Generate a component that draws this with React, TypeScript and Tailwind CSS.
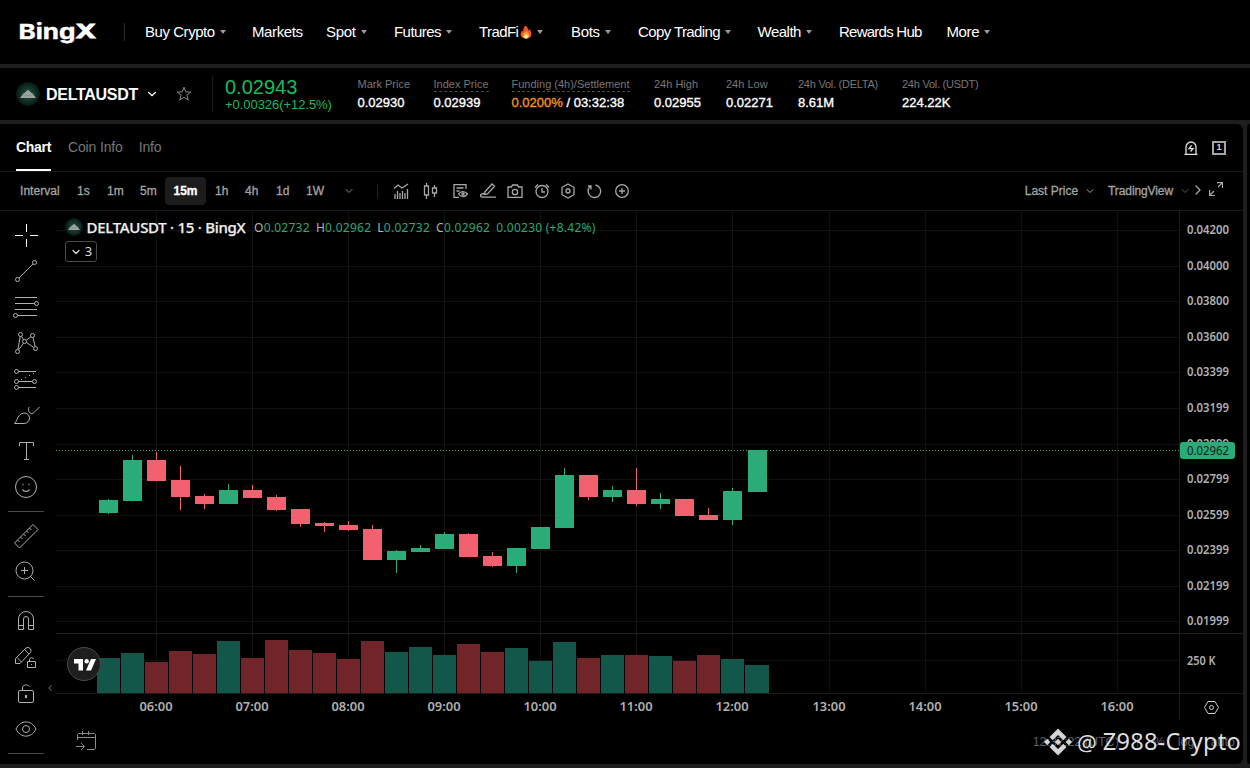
import type { ReactNode } from 'react'
import { ChevronDown, ChevronLeft, ChevronRight } from 'lucide-react'

const NAV = [
  { label: 'Buy Crypto', menu: true,  cls: 'w-[107px] tracking-[-0.45px]' },
  { label: 'Markets',    menu: false, cls: 'w-[74px] tracking-[-0.4px]' },
  { label: 'Spot',       menu: true,  cls: 'w-[68px] tracking-[-0.3px]' },
  { label: 'Futures',    menu: true,  cls: 'w-[85px] tracking-[-0.55px]' },
  { label: 'TradFi',     menu: true,  cls: 'w-[92px] tracking-[-0.6px]', hot: true },
  { label: 'Bots',       menu: true,  cls: 'w-[67px] tracking-[-0.3px]' },
  { label: 'Copy Trading', menu: true, cls: 'w-[119.5px] tracking-[-0.6px]' },
  { label: 'Wealth',     menu: true,  cls: 'w-[81.5px] tracking-[-0.5px]' },
  { label: 'Rewards Hub', menu: false, cls: 'w-[107.5px] tracking-[-0.75px]' },
  { label: 'More',       menu: true,  cls: 'w-[60px] tracking-[-0.4px]' },
]

const STATS = [
  { label: 'Mark Price',       value: '0.02930', cls: 'w-[76px]' },
  { label: 'Index Price',      value: '0.02939', cls: 'w-[78px]', dashed: true },
  { label: '24h High',         value: '0.02955', cls: 'w-[72px]' },
  { label: '24h Low',          value: '0.02271', cls: 'w-[72px]' },
  { label: '24h Vol. (DELTA)', value: '8.61M',   cls: 'w-[104px] tracking-[-0.25px]' },
  { label: '24h Vol. (USDT)',  value: '224.22K', cls: 'w-[90px] tracking-[-0.25px]' },
]

const INTERVALS = [
  { label: '1s',  cls: 'w-[30px]' },
  { label: '1m',  cls: 'w-[33px]' },
  { label: '5m',  cls: 'w-[25px]' },
  { label: '15m', cls: 'w-[41px] mr-[9px]', active: true },
  { label: '1h',  cls: 'w-[30px]' },
  { label: '4h',  cls: 'w-[31px]' },
  { label: '1d',  cls: 'w-[30px]' },
  { label: '1W',  cls: 'w-[37px]' },
]

// [up, bodyTop, bodyBottom, wickTop, wickBottom, volumeTop]
const CANDLES: [number, number, number, number, number, number][] = [
  [1, 500, 513, 499, 514, 658],
  [1, 460, 501, 455, 501, 653],
  [0, 460, 481, 452, 481, 662],
  [0, 480, 497, 466, 510, 651],
  [0, 496, 504, 494, 509, 654],
  [1, 490, 504, 484, 504, 641],
  [0, 490, 498, 485, 498, 658],
  [0, 497, 510, 495, 511, 640],
  [0, 509, 524, 509, 527, 650],
  [0, 523, 526, 522, 532, 653],
  [0, 525, 530, 521, 531, 659],
  [0, 529, 560, 525, 560, 641],
  [1, 551, 560, 550, 573, 652],
  [1, 548, 552, 545, 552, 647],
  [1, 534, 549, 532, 549, 655],
  [0, 534, 557, 533, 557, 644],
  [0, 556, 566, 552, 567, 652],
  [1, 548, 566, 548, 573, 648],
  [1, 527, 549, 527, 549, 661],
  [1, 475, 528, 468, 528, 642],
  [0, 475, 497, 475, 500, 658],
  [1, 490, 497, 486, 502, 655],
  [0, 490, 504, 468, 506, 655],
  [1, 499, 504, 493, 509, 656],
  [0, 499, 516, 499, 516, 661],
  [0, 515, 520, 508, 520, 655],
  [1, 491, 520, 488, 525, 659],
  [1, 450, 492, 450, 492, 665],
]

const PRICES: [string, number][] = [
  ['0.04200', 230], ['0.04000', 266], ['0.03800', 301], ['0.03600', 337],
  ['0.03399', 372], ['0.03199', 408], ['0.02999', 444], ['0.02799', 479],
  ['0.02599', 515], ['0.02399', 550], ['0.02199', 586], ['0.01999', 621],
]

const TIMES: [string, number][] = [
  ['06:00', 156], ['07:00', 252], ['08:00', 348], ['09:00', 444], ['10:00', 540], ['11:00', 636],
  ['12:00', 732], ['13:00', 829], ['14:00', 925], ['15:00', 1021], ['16:00', 1117],
]

const UP = '#2aab78'
const DOWN = '#f2616d'

function Tool({ children }: { children: ReactNode }) {
  return (
    <button className="flex h-9 w-[52px] shrink-0 items-center justify-center">
      <svg width="28" height="28" viewBox="0 0 28 28" fill="none" stroke="#b0b0b0" strokeWidth="1">
        {children}
      </svg>
    </button>
  )
}

function SmallTool({ children, cls = 'w-[27px]' }: { children: ReactNode; cls?: string }) {
  return (
    <button className={`flex shrink-0 items-center justify-center ${cls}`}>
      <svg width="18" height="18" viewBox="0 0 18 18" fill="none" stroke="#a8a8a8" strokeWidth="1.3">
        {children}
      </svg>
    </button>
  )
}

function Divider({ cls }: { cls: string }) {
  return <div className={`ml-2 h-px w-9 shrink-0 bg-[#4a4a4a] ${cls}`} />
}

function Stat({ label, value, cls, dashed }: { label: string; value: ReactNode; cls: string; dashed?: boolean }) {
  return (
    <div className={`flex shrink-0 flex-col items-start ${cls}`}>
      <div className={`h-[15px] text-[11px] leading-[14px] text-[#777] ${dashed ? 'border-b border-dashed border-[#4a4a4a]' : ''}`}>{label}</div>
      <div className="mt-0.5 text-[13px] leading-[18px] tracking-normal [-webkit-text-stroke:0.35px]">{value}</div>
    </div>
  )
}

function Coin({ size }: { size: number }) {
  return (
    <svg width={size} height={size} viewBox="0 0 24 24" className="shrink-0">
      <defs>
        <radialGradient id="coin">
          <stop offset="0.2" stopColor="#17503c" />
          <stop offset="1" stopColor="#0a1613" />
        </radialGradient>
      </defs>
      <circle cx="12" cy="12" r="12" fill="url(#coin)" />
      <path d="M12 7.8 15.5 11h.8l3.700 5H4l3.700-5h.8Z" fill="#9da3a1" />
      <path d="M6 13.2h12" stroke="#7d8583" strokeWidth="0.6" />
    </svg>
  )
}

function Flame() {
  return (
    <svg width="12" height="14" viewBox="0 0 12 14" className="ml-0.5">
      <path d="M5.4.6C7.8 2 8.3 4 8.2 5.6 8.9 5.3 9 4.4 9 3.8c2 2 2.6 4 2.4 5.8C11.1 12 9.2 13.6 6 13.6S.8 12 .6 9.6C.5 7.6 1.5 6.4 2.2 5.2c.2.8.5 1.3 1 1.5C3 4.5 4 2.2 5.4.6Z" fill="#f0532d" />
      <path d="M6 5.8c1.6 1.2 3.4 2.6 3.4 4.6 0 2-1.5 3.200-3.400 3.200S2.600 12.400 2.600 10.600C2.600 9 4 8.600 4.200 7.400 5 7.800 5.900 7 6 5.800Z" fill="#fb9f2f" />
      <path d="M6.2 9c1 .9 1.6 1.6 1.6 2.6s-.8 1.900-1.800 1.900-1.900-.7-1.900-1.700C4.100 10.700 5.700 10.300 6.200 9Z" fill="#fff0a8" />
    </svg>
  )
}

function Chart() {
  return (
    <svg width="1187" height="509" viewBox="56 211 1187 509" shapeRendering="crispEdges" className="block shrink-0">
      {/* Grid */}
      {TIMES.map(([t, x]) => <rect key={t} x={x} y="211" width="1" height="482" fill="#111" />)}
      {PRICES.map(([p, y]) => <rect key={p} x="56" y={y} width="1123" height="1" fill="#111" />)}
      <rect x="56" y="660" width="1123" height="1" fill="#111" />
      <rect x="56" y="633" width="1187" height="1" fill="#212121" />
      <rect x="56" y="693" width="1187" height="1" fill="#1a1a1a" />
      <rect x="1179" y="211" width="1" height="509" fill="#1c1c1c" />

      {/* Volume */}
      {CANDLES.map((c, i) => (
        <rect
          key={i}
          x={97 + i * 24}
          y={c[5]}
          width={i === CANDLES.length - 1 ? 24 : 23}
          height={693 - c[5]}
          fill={c[0] ? '#145d50' : '#7b282c'}
          fillOpacity="0.93"
        />
      ))}

      {/* Price */}
      <line x1="56" x2="1179" y1="450.5" y2="450.5" stroke={UP} strokeDasharray="1 2" />
      {CANDLES.map((c, i) => {
        const x = 99 + i * 24 + (i > 26 ? 1 : 0)
        return (
          <g key={i} fill={c[0] ? UP : DOWN}>
            <rect x={x + 9} y={c[3]} width="1" height={c[4] - c[3]} />
            <rect x={x} y={c[1]} width="19" height={c[2] - c[1]} />
          </g>
        )
      })}

      {/* Axes */}
      <g fill="#b0b0b0" fontFamily='"Noto Sans", sans-serif' fontSize="12" fontWeight="600">
        {PRICES.map(([p, y]) => <text key={p} x="1187" y={y + 4} textLength="42" lengthAdjust="spacingAndGlyphs">{p}</text>)}
        <text x="1187" y="665" textLength="28.5" lengthAdjust="spacingAndGlyphs">250 K</text>
        {TIMES.map(([t, x]) => <text key={t} x={x - 16.5} y="711" textLength="33" lengthAdjust="spacingAndGlyphs">{t}</text>)}
      </g>
      <rect x="1180" y="442" width="55" height="17" rx="3" fill={UP} shapeRendering="auto" />
      <text x="1187" y="455" textLength="42" lengthAdjust="spacingAndGlyphs" fill="#0b1f17" fontFamily='"Noto Sans", sans-serif' fontSize="12">0.02962</text>
      <g fill="none" stroke="#cfcfcf" shapeRendering="auto">
        <path d="M1208 701.5h7l3.500 6-3.500 6h-7l-3.500-6Z" />
        <circle cx="1211.5" cy="707.5" r="2" />
      </g>
    </svg>
  )
}

function Ohlc({ k, v }: { k: string; v: string }) {
  return <span className="text-[#2aa876]"><span className="text-[#b4b4b4]">{k}</span>{v}</span>
}

export default function App() {
  return (
    <div className="flex h-[768px] w-[1250px] flex-col gap-1 overflow-hidden bg-[#1e1e1e] font-['Liberation_Sans',Arial,sans-serif] text-white">

      {/* ── Site header ── */}
      <header className="flex h-16 shrink-0 items-center bg-black">
        <svg width="80" height="28" viewBox="0 0 80 28" className="ml-[18px]">
          <g fill="#fff" stroke="#fff" strokeWidth="0.4" fontFamily='"Inter", sans-serif' fontWeight="700">
            <text x="0.5" y="20.8" fontSize="20.5" textLength="57" lengthAdjust="spacingAndGlyphs">Bing</text>
            <text x="57.5" y="20.3" fontSize="18.5" strokeWidth="0.9" textLength="20.5" lengthAdjust="spacingAndGlyphs">X</text>
          </g>
        </svg>
        <div className="ml-[26px] mr-5 h-[18px] w-px bg-[#2b2b2b]" />
        <nav className="flex text-[15px]">
          {NAV.map(({ label, menu, cls, hot }) => (
            <a key={label} className={`flex shrink-0 items-center whitespace-nowrap ${cls}`}>
              {label}
              {hot && <Flame />}
              {menu && <span className="ml-[5px] h-0 w-0 border-x-[3.5px] border-t-4 border-x-transparent border-t-[#9a9a9a]" />}
            </a>
          ))}
        </nav>
      </header>

      {/* ── Ticker ── */}
      <section className="flex h-[52px] shrink-0 items-center bg-black">
        <div className="flex w-[212px] items-center pl-4">
          <Coin size={24} />
          <span className="ml-1.5 pt-px text-base font-bold tracking-[-0.28px]">DELTAUSDT</span>
          <ChevronDown size={14} strokeWidth={2} className="ml-[7px]" />
          <svg width="16" height="16" viewBox="0 0 16 16" fill="none" stroke="#8d8d8d" className="ml-[17px]">
            <path d="m8 1.200 1.800 4.600 5 .3-3.900 3.100L12.200 14 8 11.300 3.800 14l1.300-4.800L1.200 6.100l5-.3Z" />
          </svg>
        </div>
        <div className="h-9 w-px bg-[#1c1c1c]" />
        <div className="w-[132px] pl-3 text-[#1bb95c]">
          <div className="text-[20px] leading-[22px]">0.02943</div>
          <div className="text-[13px] leading-[14px] tracking-[-0.05px]">+0.00326(+12.5%)</div>
        </div>
        <div className="flex whitespace-nowrap pl-[12.5px]">
          {STATS.slice(0, 2).map(s => <Stat key={s.label} {...s} />)}
          <Stat
            label="Funding (4h)/Settlement"
            dashed
            cls="w-[142.5px]"
            value={<><span className="text-[#f7931a]">0.0200%</span> / 03:32:38</>}
          />
          {STATS.slice(2).map(s => <Stat key={s.label} {...s} />)}
        </div>
      </section>

      <div className="flex h-[640px] shrink-0 gap-1">
        <main className="flex w-[1243px] flex-col overflow-hidden rounded-r-md bg-black">

          {/* Tabs */}
          <div className="flex h-12 shrink-0 items-stretch border-b border-[#181818] pl-4 text-sm">
            <span className="w-[35px] border-b-2 border-white pt-[13px] font-bold tracking-[-0.3px]">Chart</span>
            <span className="ml-[17px] pt-[13px] tracking-[-0.15px] text-[#777]">Coin Info</span>
            <span className="ml-4 pt-[13px] tracking-[-0.15px] text-[#777]">Info</span>
            <div className="ml-auto flex items-center gap-3.5 pr-[17px]">
              <svg width="14" height="14" viewBox="0 0 14 14" fill="none" stroke="#e0e0e0" strokeWidth="1.3">
                <path d="M.5 13.300h13M2 13V6a5 5 0 0 1 10 0v7M7.700 4.300 5 7.700h4L6.600 10.500" />
              </svg>
              <span className="flex h-3.5 w-3.5 items-center justify-center border-2 border-[#a5a5a5] text-[9px] font-bold leading-none text-[#d0d0d0]">1</span>
            </div>
          </div>

          {/* Interval bar */}
          <div className="flex h-[39px] shrink-0 items-center border-b border-[#181818] pb-px text-xs text-[#a4a4a4] [-webkit-text-stroke:0.3px]">
            <span className="w-[69px] pl-5 tracking-[0.05px]">Interval</span>
            <div className="flex items-center pl-2">
              {INTERVALS.map(({ label, cls, active }) => (
                <span key={label} className={active ? `flex h-7 items-center justify-center rounded bg-[#1c1c1c] font-bold text-white ${cls}` : cls}>
                  {label}
                </span>
              ))}
            </div>
            <ChevronDown size={12} className="text-[#8a8a8a]" />
            <div className="ml-[22px] mr-2 h-3.5 w-px bg-[#262626]" />
            <SmallTool cls="w-[30px]">
              <path d="M2 6.500 6 3l4 3 6-4M3 17v-5M5.500 17V9M8 17v-6M10.500 17V9M13 17v-6M15.500 17V7" />
            </SmallTool>
            <SmallTool cls="w-[30px]">
              <path d="M4.500 1v3M4.500 13v4M2.500 4h4v9h-4ZM12.500 3v3M12.500 11v4M10.500 6h4v5h-4Z" />
            </SmallTool>
            <SmallTool cls="w-[28px]">
              <path d="M15 7V2.600H3v12.800h5M5.500 6h7M5.500 9h3" />
              <path d="M7.500 12c2-3.300 6.500-3.300 9 0-2.500 3.300-7 3.300-9 0Z" />
              <circle cx="12" cy="12" r="1" />
            </SmallTool>
            <SmallTool>
              <path d="M6 9.800 13 2l2.500 2.200L8.500 12l-3 .5ZM5 11.500c-5 .8-4 3.700-.5 3.700H17" />
            </SmallTool>
            <SmallTool>
              <path d="M2 5h3.500l1-2h5l1 2H16v10.300H2Z" />
              <circle cx="9" cy="10" r="2.700" />
            </SmallTool>
            <SmallTool>
              <circle cx="9" cy="9.500" r="6" />
              <path d="M9 6v4h3M2 5.500l3-3M16 5.500l-3-3" />
            </SmallTool>
            <SmallTool cls="w-[26px]">
              <path d="M9 2 15 5.300v7.400L9 16l-6-3.300V5.300Z" />
              <circle cx="9" cy="9" r="2" />
            </SmallTool>
            <SmallTool>
              <path d="M4.200 4.500A6.300 6.300 0 1 0 9.500 3M2 4h3v3.500" />
            </SmallTool>
            <SmallTool>
              <circle cx="9" cy="9" r="6.300" />
              <path d="M9 6v6M6 9h6" />
            </SmallTool>
            <div className="ml-auto flex items-center pr-5">
              <span>Last Price</span>
              <ChevronDown size={12} className="ml-1.5 mr-3" />
              <span className="tracking-[-0.1px]">TradingView</span>
              <ChevronDown size={12} className="ml-1.5 text-[#5c5c5c]" />
              <ChevronRight size={16} className="-ml-px -mt-0.5" />
              <svg width="14" height="14" viewBox="0 0 14 14" fill="none" stroke="#a8a8a8" strokeWidth="1.2" className="-mt-1 ml-[3px]">
                <path d="M8 .6h5.500V6M13.500.6 9 5M.6 8v5.500H6M.6 13.500 5 9" />
              </svg>
            </div>
          </div>

          <div className="flex grow">

            {/* Drawing tools */}
            <aside className="flex w-14 shrink-0 flex-col pt-[7px]">
              <Tool><path d="M14.500 2v8M14.500 17v8M3 13.500h8M18 13.500h8" stroke="#fff" /></Tool>
              <Tool>
                <circle cx="5.500" cy="21.500" r="2" /><circle cx="22.500" cy="4.500" r="2" />
                <path d="M7 20 21 6" />
              </Tool>
              <Tool>
                <path d="M3 3.500h22M3 9.500h19.500M3 15.500h22M5.500 21.500H25" />
                <circle cx="24.500" cy="9.500" r="2" /><circle cx="3.500" cy="21.500" r="2" />
              </Tool>
              <Tool>
                <circle cx="8.500" cy="4.500" r="2" /><circle cx="20.500" cy="5.500" r="2" /><circle cx="12.500" cy="11.500" r="2" />
                <circle cx="5.500" cy="21.500" r="2" /><circle cx="23.500" cy="18.500" r="2" />
                <path d="M5.900 19.500 8.200 6.500M9.500 6.200l2 3.600M14.100 10.300l4.800-3.600M21 7.500l2.100 9M14.300 12.400l7.400 5M11.400 13.200l-4.800 6.600" />
              </Tool>
              <Tool>
                <circle cx="4.500" cy="5.500" r="2" /><circle cx="4.500" cy="15.500" r="2" /><circle cx="22.500" cy="15.500" r="2" /><circle cx="4.500" cy="21.500" r="2" />
                <path d="M6.500 5.500H24M6.500 15.500h14M6.500 21.500H24" />
                <path d="M9 13.500h1M13 11.500h1M17 9.500h1M21 7.500h1" />
              </Tool>
              <Tool>
                <path d="M2.500 21.500C5.500 19 5.500 11.500 12 11c3 0 5.500 2 5.500 5s-2.500 5.500-5.500 5.500ZM17.300 5c-1.500 2-.8 6 2.200 6.500 2 .3 3-1.500 4-2.500l4-4" />
              </Tool>
              <Tool><path d="M7.500 8V4.500h14V8M14.500 4.500v17M12 21.500h5" /></Tool>
              <Tool>
                <circle cx="14" cy="13" r="10.500" />
                <path d="M10.500 15.500c1.500 2.500 5.500 2.500 7 0M10.500 10.500h1M16.500 10.500h1" strokeWidth="1.300" />
              </Tool>
              <Divider cls="mb-1.5 mt-[5px]" />
              <Tool>
                <path d="M2.500 21 21 2.500l5 5L7.500 26ZM5.500 18l2 2M8.500 15l2 2M11.500 12l2 2M14.500 9l2 2M17.500 6l2 2" />
              </Tool>
              <Tool>
                <circle cx="12.500" cy="12.500" r="8.500" />
                <path d="M12.500 9v7M9 12.500h7M18.500 18.500l4 4" />
              </Tool>
              <Divider cls="my-1.5" />
              <Tool>
                <path d="M6.500 22.500V12a7.500 7.500 0 0 1 15 0v10.500h-5V12a2.500 2.500 0 0 0-5 0v10.500ZM6.500 18.500h5M16.500 18.500h5" />
              </Tool>
              <Tool>
                <path d="M3.500 20.500v-5L14 5c2-2 6.500 1 4.500 4.500L8 20.500ZM12.500 6.500l4.500 4.500M5 14.500l4.500 4.500" />
                <path d="M15.500 18.500h8v6h-8Z" fill="#000" />
                <path d="M17.500 18.500v-2c0-2 3.500-2.500 4-.5M19.500 21v1" />
              </Tool>
              <Tool>
                <rect x="6.500" y="11.500" width="15" height="12" rx="1.500" />
                <path d="M10.500 11.500V9c0-3.500 5-4 7-1.500" /><path d="M14 16v3" strokeWidth="2" />
              </Tool>
              <Tool>
                <path d="M4 14c4.500-9.500 15.500-9.500 20 0-4.500 9.500-15.500 9.500-20 0Z" />
                <circle cx="14" cy="14" r="3.500" />
              </Tool>
              <Divider cls="mt-1.5" />
            </aside>

            <div className="relative flex flex-col">
              <Chart />

              {/* Legend */}
              <div className="absolute left-2 top-[5px] flex h-[22px] items-center whitespace-nowrap pl-px font-['Noto_Sans',sans-serif]">
                <Coin size={18} />
                <span className="ml-[3.5px] w-[167.5px] text-[15px] font-medium tracking-[-0.28px] text-[#eee] [-webkit-text-stroke:0.25px]">DELTAUSDT · 15 · BingX</span>
                <div className="flex gap-1.5 pt-px text-[12px] tracking-[0.26px]">
                  <Ohlc k="O" v="0.02732" />
                  <Ohlc k="H" v="0.02962" />
                  <Ohlc k="L" v="0.02732" />
                  <Ohlc k="C" v="0.02962" />
                  <Ohlc k="" v="0.00230 (+8.42%)" />
                </div>
              </div>
              <button className="absolute left-[9px] top-[30px] flex h-[21px] w-8 items-center justify-center gap-[3px] rounded-[3px] border border-[#4a4a4a] bg-black font-['Noto_Sans',sans-serif] text-[13px] text-[#ddd]">
                <ChevronDown size={12} strokeWidth={2.5} /> 3
              </button>
              <ChevronLeft size={10} className="absolute -left-[11px] top-[472px] text-[#999]" />

              {/* TradingView badge */}
              <div className="absolute left-[11px] top-[436px] flex h-[34px] w-[34px] items-center justify-center rounded-full border border-[#4a4a4a] bg-[#1e1e1e]">
                <svg width="22" height="12" viewBox="0 0 22 12" fill="#fff" className="ml-px mt-px">
                  <path d="M0 0h9v11.500H4.500V4.500H0ZM17 0h5l-5 11.500h-5Z" />
                  <circle cx="12.700" cy="2.200" r="2.200" />
                </svg>
              </div>

              {/* Bottom bar */}
              <div className="flex grow items-center justify-between pl-5">
                <svg width="20" height="20" viewBox="0 0 20 20" fill="none" stroke="#8c8c8c" className="-mt-0.5">
                  <path d="M1.500 9V4c0-1 .5-1.500 1.500-1.500h15c1 0 1.500.5 1.500 1.500v13c0 1-.5 1.500-1.500 1.500h-7M1.500 6.500h18M6.500 0v4M12.500 0v4M0 15.500h8M5 12l3.500 3.500L5 19" />
                </svg>
                <div className="flex items-center pr-2 text-[12.5px] text-[#5c6068]">
                  <span className="w-[104px]">12:37:22 (UTC)</span>
                  <span className="mr-4 h-4 w-px bg-[#333]" />
                  <span className="w-6 text-[#5a5a5a]">%</span>
                  <span className="w-[33px] text-[#66615a]">log</span>
                  <span>auto</span>
                </div>
              </div>
              <div className="absolute bottom-[6px] right-[2px] flex h-8 items-center whitespace-nowrap font-['Noto_Sans',sans-serif] text-[23.5px] text-[#dedede]">
                <svg width="28" height="28" viewBox="0 0 28 28" fill="#d4d4d4" className="mr-[5px]">
                  <path d="m14 .5 8.500 8.500-3.200 3.200L14 6.900l-5.300 5.300L5.500 9ZM14 27.500 5.500 19l3.200-3.200 5.300 5.300 5.300-5.300 3.200 3.200ZM14 10.800l3.200 3.200-3.200 3.200-3.200-3.200ZM3.200 10.800 6.400 14l-3.200 3.200L0 14ZM24.800 10.800 28 14l-3.200 3.200-3.200-3.200Z" />
                </svg>
                <span className="mr-1.5 text-[22px]">@</span>
                <span className="tracking-[0.3px]">Z988-Crypto</span>
              </div>
            </div>
          </div>
        </main>

        <div className="w-[3px] shrink-0 rounded-l-sm bg-black" />
      </div>
    </div>
  )
}
